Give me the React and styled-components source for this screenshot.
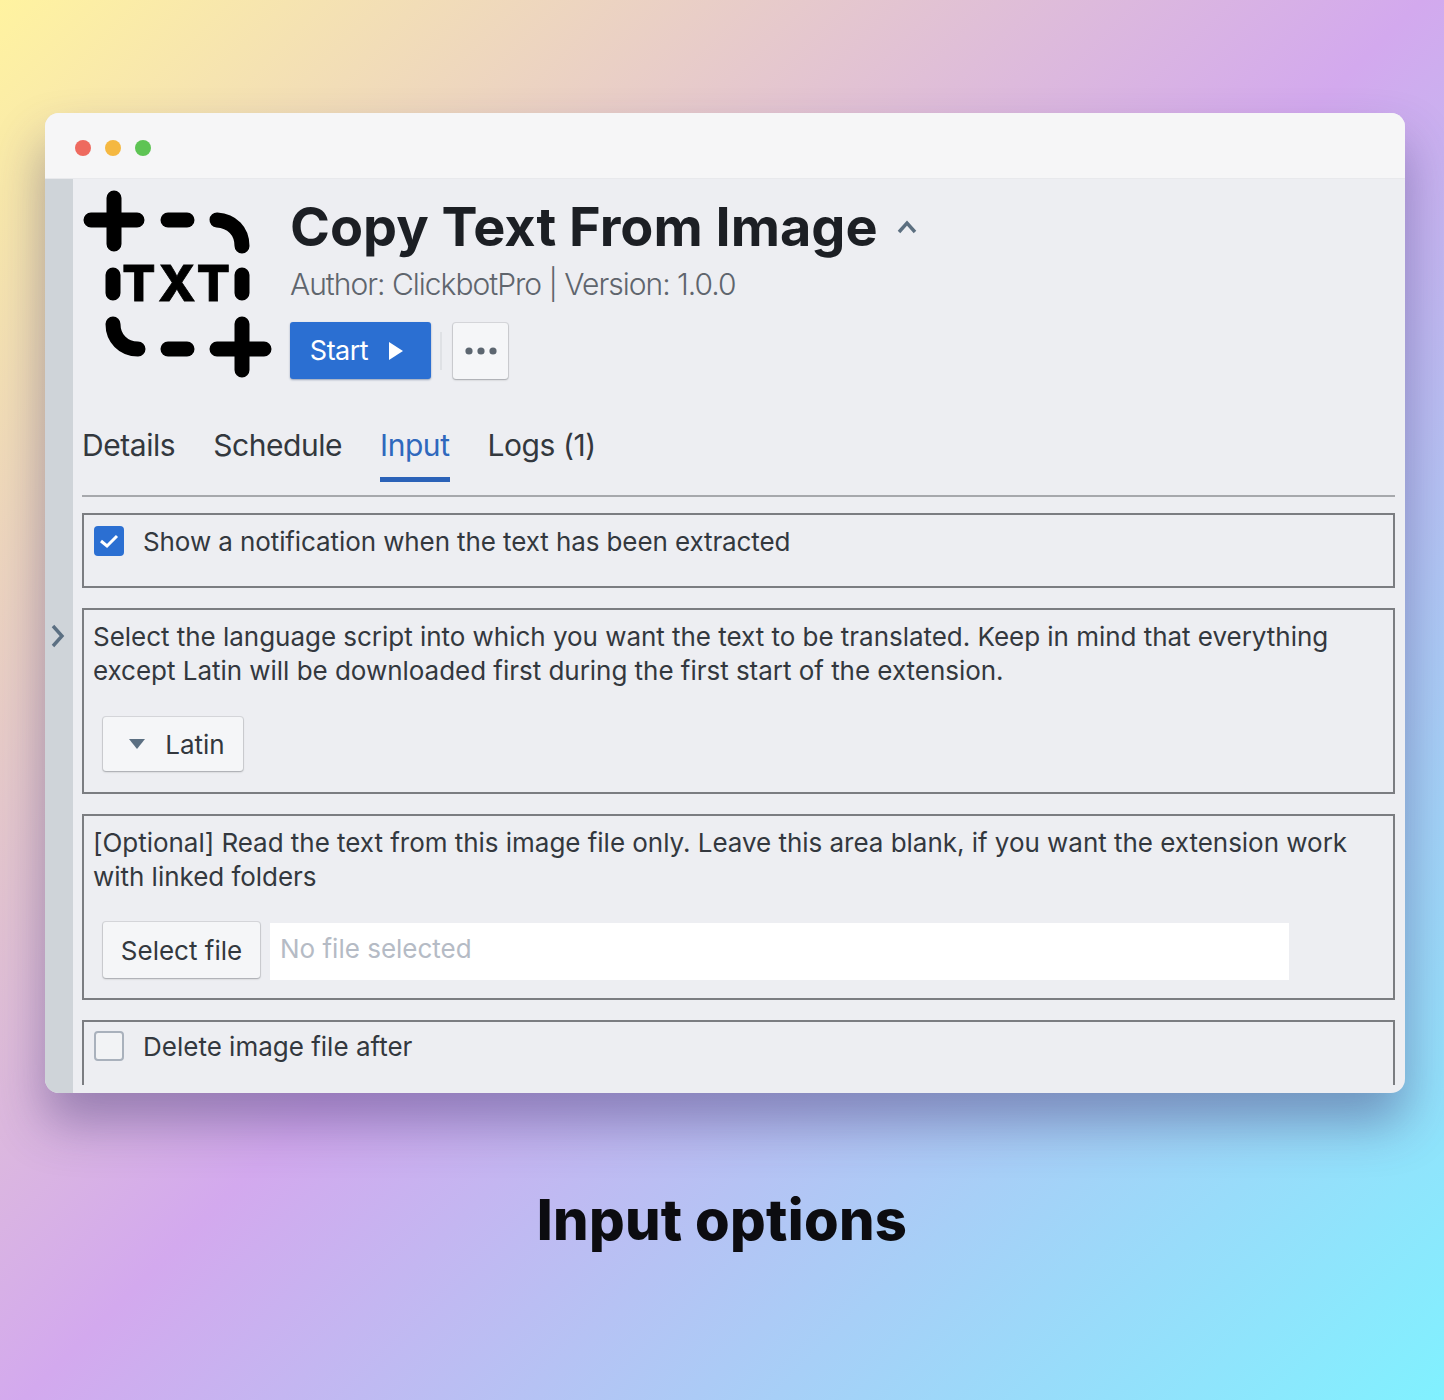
import React from 'react'
import styled, { createGlobalStyle } from 'styled-components'

const GlobalStyle = createGlobalStyle`
  html, body {
    margin: 0;
    padding: 0;
  }
  body {
    font-family: Inter, "Liberation Sans", sans-serif;
  }
  * {
    box-sizing: border-box;
  }
`

const Page = styled.div`
  width: 1444px;
  height: 1400px;
  overflow: hidden;
  padding: 113px 39px 0 45px;
  background: linear-gradient(135deg, #fff3a0 0%, #d3a9ee 50%, #80f1ff 100%);
`
const Window = styled.div`
  width: 1360px;
  height: 980px;
  display: flex;
  flex-direction: column;
  overflow: hidden;
  background-color: #edeef2;
  border-radius: 14px;
  box-shadow: 0 30px 50px rgba(60, 50, 110, 0.42);
`
const TitleBar = styled.div`
  height: 66px;
  flex-shrink: 0;
  display: flex;
  align-items: center;
  gap: 14px;
  padding: 5px 0 0 30px;
  background-color: #f6f6f7;
  border-bottom: 1px solid #e8e9ec;
`
const Light = styled.span`
  width: 16px;
  height: 16px;
  border-radius: 50%;
  background-color: ${(p) => p.$color};
`
const Body = styled.div`
  flex: 1;
  display: flex;
  min-height: 0;
`
const Rail = styled.div`
  width: 28px;
  flex-shrink: 0;
  display: flex;
  align-items: center;
  justify-content: center;
  padding-right: 3px;
  background-color: #cfd4d9;
`
const Content = styled.div`
  flex: 1;
  min-width: 0;
  padding: 10px 10px 8px 9px;
  display: flex;
  flex-direction: column;
`
const Header = styled.div`
  display: flex;
  gap: 18px;
  height: 189px;
`
const Info = styled.div`
  display: flex;
  flex-direction: column;
`
const TitleRow = styled.div`
  display: flex;
  align-items: center;
  gap: 19px;
  height: 76px;
`
const Title = styled.h1`
  margin: 0;
  font-size: 54px;
  line-height: 76px;
  font-weight: 700;
  color: #1c1f24;
  white-space: nowrap;
`
const Meta = styled.div`
  margin-top: -1px;
  font-size: 30px;
  line-height: 40px;
  font-weight: 300;
  letter-spacing: -1px;
  color: #5f656d;
`
const Actions = styled.div`
  margin-top: 18px;
  display: flex;
  align-items: center;
`
const StartButton = styled.button`
  width: 141px;
  height: 57px;
  display: flex;
  align-items: center;
  justify-content: center;
  gap: 20px;
  padding: 0 7px 0 0;
  border: none;
  border-radius: 3px;
  background-color: #2b6fd2;
  color: #fff;
  font-family: inherit;
  font-size: 27px;
  letter-spacing: -0.5px;
  box-shadow: 0 1px 2px rgba(20, 50, 100, 0.4);
`
const Separator = styled.span`
  width: 2px;
  height: 38px;
  margin: 0 11px 0 9px;
  background-color: #dfe1e5;
`
const MoreButton = styled.button`
  width: 55px;
  height: 56px;
  display: flex;
  align-items: center;
  justify-content: center;
  padding: 0;
  border: none;
  border-radius: 3px;
  background-color: #f5f6f8;
  box-shadow: 0 0 0 1px rgba(16, 22, 26, 0.1), 0 1px 2px rgba(16, 22, 26, 0.25);
`
const Tabs = styled.div`
  margin-top: 41px;
  display: flex;
  gap: 38px;
  padding-bottom: 13px;
  border-bottom: 2px solid #a6a8ac;
`
const Tab = styled.div`
  height: 63px;
  font-size: 30px;
  line-height: 53px;
  letter-spacing: -0.45px;
  color: ${(p) => (p.$active ? '#2f68bd' : '#33383e')};
  border-bottom: 5px solid ${(p) => (p.$active ? '#2b62b8' : 'transparent')};
`
const Group = styled.div`
  flex-shrink: 0;
  height: ${(p) => p.$height}px;
  margin-top: ${(p) => p.$top || 20}px;
  padding: ${(p) => (p.$open ? '8px 10px' : '10px')};
  border: 2px solid #7b7d81;
  border-bottom: ${(p) => (p.$open ? 'none' : '2px solid #7b7d81')};
  color: #33383e;
  font-size: 26px;
  line-height: 34px;
`
const CheckRow = styled.label`
  display: flex;
  align-items: center;
  gap: 19px;
  letter-spacing: ${(p) => (p.$tight ? '-0.1px' : '0')};
`
const Check = styled.span`
  width: 30px;
  height: 30px;
  flex-shrink: 0;
  margin-top: -2px;
  display: flex;
  align-items: center;
  justify-content: center;
  border-radius: 4px;
  background-color: ${(p) => (p.$checked ? '#2b6fd2' : '#f2f3f5')};
  border: ${(p) => (p.$checked ? 'none' : '2px solid #a9b1bc')};
`
const Note = styled.p`
  margin: 0 0 0 -1px;
  letter-spacing: -0.03px;
`
const Controls = styled.div`
  margin-top: ${(p) => p.$top}px;
  margin-left: 9px;
  display: flex;
  gap: 10px;
`
const SelectButton = styled.button`
  height: ${(p) => p.$height}px;
  width: ${(p) => p.$width}px;
  display: flex;
  align-items: center;
  justify-content: center;
  gap: 20px;
  padding: 0 0 0 ${(p) => p.$inset || 0}px;
  border: none;
  border-radius: 3px;
  background-color: #f5f6f8;
  color: #33383e;
  font-family: inherit;
  font-size: 26px;
  box-shadow: 0 0 0 1px rgba(16, 22, 26, 0.1), 0 1px 2px rgba(16, 22, 26, 0.25);
`
const FileField = styled.div`
  width: 1019px;
  height: 57px;
  margin-top: 1px;
  padding-left: 10px;
  background-color: #fff;
  color: #b5bbc5;
  font-size: 26px;
  line-height: 51px;
`
const Caption = styled.div`
  margin-top: 93px;
  margin-left: -45px;
  width: 1444px;
  text-align: center;
  font-size: 56px;
  line-height: 68px;
  font-weight: 800;
  letter-spacing: 0.3px;
  color: #0c0c10;
`

const Logo = () => (
  <svg width="190" height="190" viewBox="82 189 190 190" fill="none" stroke="#000" strokeWidth="15" strokeLinecap="round">
    <path d="M114 198v46M91 220h46" />
    <path d="M168 220h19" />
    <path d="M217 220c15 1 25 11 25 26" />
    <path d="M113 275v18M242 275v18" />
    <path d="M113 324c0 14 10 25 25 25" />
    <path d="M168 349h19" />
    <path d="M242 324v46M217 349h47" />
    <text x="177.5" y="301" textAnchor="middle" fill="#000" stroke="#000" strokeWidth="0.8" strokeLinecap="butt" fontFamily="Inter, sans-serif" fontWeight="800" fontSize="49" letterSpacing="3">TXT</text>
  </svg>
)

const App = () => {
  return (
    <>
      <GlobalStyle />
      <Page>
        <Window>
          <TitleBar>
            <Light $color="#ee6a5f" />
            <Light $color="#f5b841" />
            <Light $color="#5ec454" />
          </TitleBar>
          <Body>
            <Rail>
              <svg width="16" height="24" viewBox="0 0 16 24" fill="none" stroke="#5b6f82" strokeWidth="3.4">
                <path d="M3 2l9 10-9 10" />
              </svg>
            </Rail>
            <Content>
              <Header>
                <Logo />
                <Info>
                  <TitleRow>
                    <Title>Copy Text From Image</Title>
                    <svg width="20" height="14" viewBox="0 0 20 14" fill="none" stroke="#5c6f80" strokeWidth="3.4">
                      <path d="M2 12l8-9 8 9" />
                    </svg>
                  </TitleRow>
                  <Meta>Author: ClickbotPro | Version: 1.0.0</Meta>
                  <Actions>
                    <StartButton>
                      Start
                      <svg width="16" height="20" viewBox="0 0 16 20" fill="#fff">
                        <path d="M1 1l14 9-14 9z" />
                      </svg>
                    </StartButton>
                    <Separator />
                    <MoreButton>
                      <svg width="32" height="8" viewBox="0 0 32 8" fill="#5c6670">
                        <circle cx="4" cy="4" r="3.6" />
                        <circle cx="16" cy="4" r="3.6" />
                        <circle cx="28" cy="4" r="3.6" />
                      </svg>
                    </MoreButton>
                  </Actions>
                </Info>
              </Header>
              <Tabs>
                <Tab>Details</Tab>
                <Tab>Schedule</Tab>
                <Tab $active>Input</Tab>
                <Tab>Logs (1)</Tab>
              </Tabs>
              <Group $height={75} $top={16}>
                <CheckRow $tight>
                  <Check $checked>
                    <svg width="20" height="16" viewBox="0 0 20 16" fill="none" stroke="#fff" strokeWidth="3">
                      <path d="M2 8l6 5L18 3" />
                    </svg>
                  </Check>
                  Show a notification when the text has been extracted
                </CheckRow>
              </Group>
              <Group $height={186}>
                <Note>Select the language script into which you want the text to be translated. Keep in mind that everything except Latin will be downloaded first during the first start of the extension.</Note>
                <Controls $top={29}>
                  <SelectButton $width={140} $height={54} $inset={8}>
                    <svg width="16" height="10" viewBox="0 0 16 10" fill="#5b6f82">
                      <path d="M0 0h16l-8 10z" />
                    </svg>
                    Latin
                  </SelectButton>
                </Controls>
              </Group>
              <Group $height={186}>
                <Note>[Optional] Read the text from this image file only. Leave this area blank, if you want the extension work with linked folders</Note>
                <Controls $top={28}>
                  <SelectButton $width={157} $height={56}>Select file</SelectButton>
                  <FileField>No file selected</FileField>
                </Controls>
              </Group>
              <Group $height={65} $open>
                <CheckRow>
                  <Check />
                  Delete image file after
                </CheckRow>
              </Group>
            </Content>
          </Body>
        </Window>
        <Caption>Input options</Caption>
      </Page>
    </>
  )
}

export default App
